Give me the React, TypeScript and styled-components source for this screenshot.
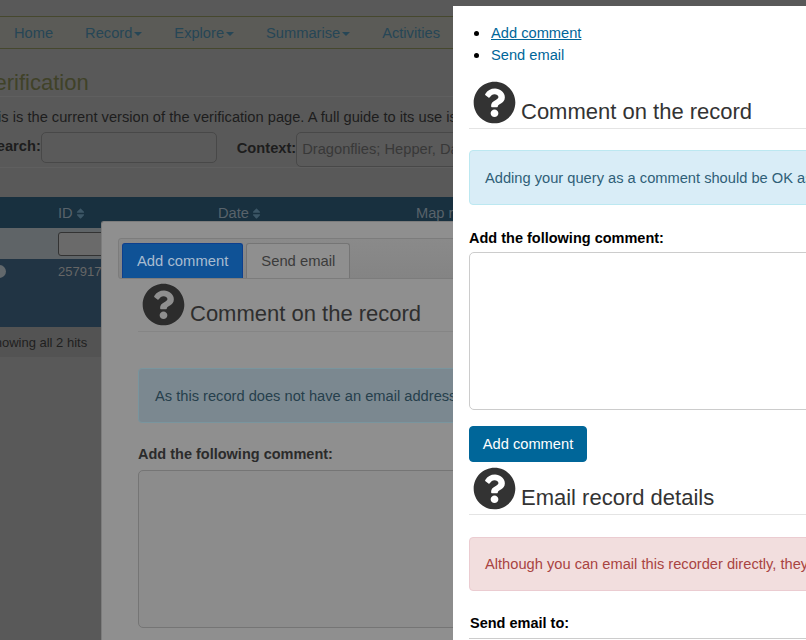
import * as React from 'react';
import styled, { createGlobalStyle } from 'styled-components';
import { FaQuestionCircle, FaSort } from 'react-icons/fa';

const Global = createGlobalStyle`
    html, body {
        margin: 0;
        padding: 0;
        background: #595959;
    }
    body {
        font-family: "Liberation Sans", Arial, sans-serif;
        font-size: 14px;
    }
`;

const Stage = styled.div`
    position: relative;
    width: 806px;
    height: 640px;
    overflow: hidden;
    background: #595959;
`;

const Page = styled.div`
    padding-top: 16px;
    color: #1d1d1d;
`;

const Nav = styled.nav`
    display: flex;
    align-items: center;
    height: 31px;
    padding-left: 14px;
    gap: 32px;
    background: #5b5b57;
    border-top: 1px solid #46482e;
    border-bottom: 1px solid #46482e;
    font-size: 14.67px;
    color: #264656;
`;

const NavItem = styled.span`
    white-space: nowrap;
`;

const Caret = styled.i`
    display: inline-block;
    margin-left: 2px;
    vertical-align: middle;
    border-top: 4px solid #264656;
    border-left: 4px solid transparent;
    border-right: 4px solid transparent;
`;

const Title = styled.h1`
    margin: 21px 0 0 -19px;
    padding-bottom: 1px;
    height: 25px;
    font-size: 22px;
    line-height: 25px;
    font-weight: 400;
    color: #404228;
    border-bottom: 1px solid #5f5f5f;
    white-space: nowrap;
`;

const Intro = styled.p`
    margin: 12px 0 0 -19px;
    font-size: 14.67px;
    line-height: 17px;
    white-space: nowrap;
`;

const SearchRow = styled.div`
    display: flex;
    align-items: flex-start;
    height: 35px;
    margin: 6px 0 0 -13px;
    border-bottom: 1px solid #5f5f5f;
    font-size: 14.67px;
    font-weight: 700;
`;

const SearchLabel = styled.label`
    margin-top: 6px;
    white-space: nowrap;
`;

const ContextLabel = styled(SearchLabel)`
    margin-top: 8px;
    margin-left: 20px;
`;

const PageInput = styled.div<{ $w: number; $h: number }>`
    width: ${(p) => p.$w}px;
    height: ${(p) => p.$h}px;
    box-sizing: border-box;
    padding: 8px 5px;
    border: 1px solid #484848;
    border-radius: 5px;
    background: #5a5a5a;
    color: #383838;
    font-weight: 400;
    white-space: nowrap;
`;

const Table = styled.div`
    margin-top: 29px;
`;

const Row = styled.div<{ $bg: string; $h: number }>`
    display: grid;
    grid-template-columns: 58px 160px 198px 1fr;
    height: ${(p) => p.$h}px;
    background: ${(p) => p.$bg};
    color: #666;
`;

const HeadCell = styled.div`
    padding-top: 8px;
    font-size: 14.67px;
    color: #59636b;
    white-space: nowrap;
`;

const SortIcon = styled(FaSort)`
    margin-left: 2px;
    width: 11px;
    height: 13px;
    vertical-align: -2px;
    color: #3c5666;
`;

const FilterBox = styled.div`
    width: 60px;
    height: 24px;
    margin-top: 4px;
    box-sizing: border-box;
    border: 1px solid #333;
    border-radius: 3px;
    background: #6a6a6a;
`;

const RowDot = styled.span`
    display: block;
    width: 13px;
    height: 13px;
    margin: 6px 0 0 -7px;
    border-radius: 50%;
    background: #62686c;
`;

const RowId = styled.div`
    padding-top: 5px;
    font-size: 13px;
    line-height: 15px;
    white-space: nowrap;
`;

const Hits = styled.div`
    height: 30px;
    margin-left: -14px;
    line-height: 31px;
    font-size: 13px;
    color: #1f1f1f;
    background: #535353;
`;

const Dialog = styled.div`
    position: absolute;
    left: 101px;
    top: 221px;
    width: 705px;
    height: 419px;
    box-sizing: border-box;
    padding: 16px 0 0 16px;
    background: #8f8f8f;
    border-radius: 3px 0 0 0;
    border-left: 1px solid #7c7c7c;
    border-top: 1px solid #7c7c7c;
    overflow: hidden;
`;

const TabBar = styled.div`
    display: flex;
    align-items: flex-end;
    gap: 3px;
    height: 39px;
    padding-left: 3px;
    background: linear-gradient(#8a8a8a, #848484);
    border: 1px solid #7c7c7c;
    border-radius: 3px;
    font-size: 14.8px;
`;

const Tab = styled.div<{ $active?: boolean }>`
    box-sizing: border-box;
    height: 35px;
    padding: 9px 14px 0;
    border: 1px solid ${(p) => (p.$active ? '#0d3f8e' : '#757575')};
    border-bottom: 0;
    border-radius: 3px 3px 0 0;
    background: ${(p) => (p.$active ? '#0f5296' : '#8f8f8f')};
    color: ${(p) => (p.$active ? '#a8bcd0' : '#3b3b3b')};
`;

const DialogBody = styled.div`
    padding: 4px 0 0 20px;
`;

const Panel = styled.div`
    position: absolute;
    left: 453px;
    top: 6px;
    width: 353px;
    height: 634px;
    box-sizing: border-box;
    padding: 15px 0 0 16px;
    background: #fff;
    overflow: hidden;
`;

const Links = styled.ul`
    margin: 0 0 16px;
    padding: 0 0 0 22px;
    font-size: 14.67px;
    line-height: 22px;
    color: #000;
    li {
        height: 22px;
    }
    li::marker {
        font-size: 18px;
    }
`;

const LinkText = styled.a<{ $current?: boolean }>`
    color: #006699;
    text-decoration: ${(p) => (p.$current ? 'underline' : 'none')};
`;

const Heading = styled.h2<{ $dim?: boolean; $top?: number }>`
    display: flex;
    align-items: flex-end;
    width: 800px;
    margin: ${(p) => p.$top || 0}px 0 0;
    padding: 0 0 ${(p) => (p.$dim ? 3 : 2)}px 4px;
    box-sizing: content-box;
    height: 45px;
    font-size: 22px;
    line-height: 28px;
    font-weight: 400;
    color: ${(p) => (p.$dim ? '#2e2e2e' : '#333')};
    border-bottom: 1px solid ${(p) => (p.$dim ? '#858585' : '#e4e4e4')};
    white-space: nowrap;
`;

const HeadingIcon = styled(FaQuestionCircle)<{ $dim?: boolean }>`
    flex: none;
    width: 43px;
    height: 43px;
    margin: 0 5px 2px 0;
    color: ${(p) => (p.$dim ? '#2c2c2c' : '#333')};
`;

const Alert = styled.div<{ $tone: 'info' | 'danger' | 'dim'; $top: number; $h: number }>`
    box-sizing: border-box;
    width: 800px;
    height: ${(p) => p.$h}px;
    margin-top: ${(p) => p.$top}px;
    padding-left: ${(p) => (p.$tone === 'dim' ? 16 : 15)}px;
    display: flex;
    align-items: center;
    border-radius: 4px;
    border: 1px solid
        ${(p) => (p.$tone === 'info' ? '#bce8f1' : p.$tone === 'danger' ? '#ebccd1' : '#79959e')};
    background: ${(p) => (p.$tone === 'info' ? '#d9edf7' : p.$tone === 'danger' ? '#f2dede' : '#7b8890')};
    color: ${(p) => (p.$tone === 'info' ? '#2f5f78' : p.$tone === 'danger' ? '#a94442' : '#263f4c')};
    font-size: 14.67px;
    white-space: nowrap;
`;

const FieldLabel = styled.label<{ $dim?: boolean; $top: number; $left?: number }>`
    display: block;
    margin: ${(p) => p.$top}px 0 0 ${(p) => p.$left || 0}px;
    font-size: 14.5px;
    line-height: 17px;
    font-weight: 700;
    color: ${(p) => (p.$dim ? '#2b2b2b' : '#000')};
    white-space: nowrap;
`;

const TextBox = styled.div<{ $dim?: boolean; $top: number }>`
    box-sizing: border-box;
    width: 800px;
    height: 158px;
    margin-top: ${(p) => p.$top}px;
    border: 1px solid ${(p) => (p.$dim ? '#757575' : '#ccc')};
    border-radius: 5px;
    background: ${(p) => (p.$dim ? '#8c8c8c' : '#fff')};
`;

const SubmitButton = styled.button`
    display: block;
    width: 118px;
    height: 36px;
    margin-top: 16px;
    padding: 0;
    border: 1px solid #006699;
    border-radius: 4px;
    background: #006699;
    color: #fff;
    font-family: inherit;
    font-size: 14.67px;
`;

const EmailInput = styled.div`
    box-sizing: border-box;
    width: 800px;
    height: 20px;
    margin-top: 6px;
    border-top: 1px solid #ccc;
`;

const SectionHeading = ({ dim, top, children }: { dim?: boolean; top?: number; children: React.ReactNode }) => (
    <Heading $dim={dim} $top={top}>
        <HeadingIcon $dim={dim} />
        <span>{children}</span>
    </Heading>
);

const App = () => (
    <Stage>
        <Global />
        <Page>
            <Nav>
                <NavItem>Home</NavItem>
                <NavItem>Record<Caret /></NavItem>
                <NavItem>Explore<Caret /></NavItem>
                <NavItem>Summarise<Caret /></NavItem>
                <NavItem>Activities</NavItem>
            </Nav>
            <Title>Verification</Title>
            <Intro>This is the current version of the verification page. A full guide to its use is available</Intro>
            <SearchRow>
                <SearchLabel>Search:</SearchLabel>
                <PageInput $w={176} $h={31} />
                <ContextLabel>Context:</ContextLabel>
                <PageInput $w={300} $h={35}>Dragonflies; Hepper, David</PageInput>
            </SearchRow>
            <Table>
                <Row $bg="#18303f" $h={31}>
                    <div />
                    <HeadCell>ID<SortIcon /></HeadCell>
                    <HeadCell>Date<SortIcon /></HeadCell>
                    <HeadCell>Map ref</HeadCell>
                </Row>
                <Row $bg="#5f6467" $h={31}>
                    <div />
                    <FilterBox />
                </Row>
                <Row $bg="#213444" $h={68}>
                    <RowDot />
                    <RowId>2579170</RowId>
                </Row>
                <Hits>Showing all 2 hits</Hits>
            </Table>
        </Page>

        <Dialog>
            <TabBar>
                <Tab $active>Add comment</Tab>
                <Tab>Send email</Tab>
            </TabBar>
            <DialogBody>
                <SectionHeading dim>Comment on the record</SectionHeading>
                <Alert $tone="dim" $top={36} $h={55}>
                    As this record does not have an email address for the recorder
                </Alert>
                <FieldLabel $dim $top={23}>Add the following comment:</FieldLabel>
                <TextBox $dim $top={7} />
            </DialogBody>
        </Dialog>

        <Panel>
            <Links>
                <li><LinkText $current href="#comment">Add comment</LinkText></li>
                <li><LinkText href="#email">Send email</LinkText></li>
            </Links>
            <SectionHeading>Comment on the record</SectionHeading>
            <Alert $tone="info" $top={21} $h={55}>
                Adding your query as a comment should be OK as this recorder
            </Alert>
            <FieldLabel $top={25}>Add the following comment:</FieldLabel>
            <TextBox $top={5} />
            <SubmitButton>Add comment</SubmitButton>
            <SectionHeading top={5}>Email record details</SectionHeading>
            <Alert $tone="danger" $top={22} $h={54}>
                Although you can email this recorder directly, they may prefer
            </Alert>
            <FieldLabel $top={24} $left={1}>Send email to:</FieldLabel>
            <EmailInput />
        </Panel>
    </Stage>
);

export default App;
